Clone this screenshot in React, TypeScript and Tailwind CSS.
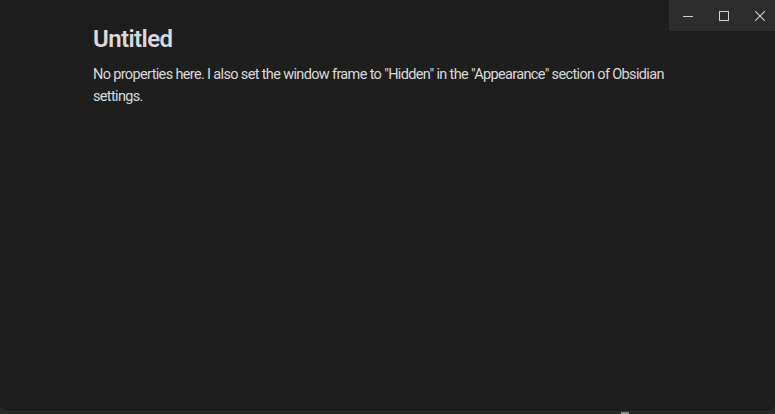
export default function App() {
  return (
    <div className="relative h-[414px] w-[775px] overflow-hidden bg-[#262626] font-['Roboto',sans-serif]">
      <div className="flex h-[412px] flex-col rounded-b-[7px] border-b border-[#2f2f2f] bg-[#1e1e1e] pl-[93px] pt-[24px]">
        <h1 className="text-[24px] font-semibold leading-[30px] tracking-[-0.6px] text-[#dadada]">Untitled</h1>
        <p className="mt-[10px] w-[590px] text-[14.5px] leading-[22px] tracking-[-0.65px] text-[#dadada]">
          No properties here. I also set the window frame to "Hidden" in the "Appearance" section of Obsidian settings.
        </p>
      </div>
      <div className="absolute bottom-0 left-[621px] h-[2px] w-[8px] bg-[#8a8a8a]" />

      {/* window controls */}
      <div className="absolute right-0 top-0 flex h-[31px] w-[106px] bg-[#2d2d2d] text-[#cfcfcf]">
        <button className="flex w-[37px] items-center justify-center">
          <svg width="10" height="10" viewBox="0 0 10 10"><path d="M0 5.5h10" stroke="currentColor" strokeWidth="1" /></svg>
        </button>
        <button className="flex w-[36px] items-center justify-center">
          <svg width="10" height="10" viewBox="0 0 10 10"><rect x="0.5" y="0.5" width="9" height="9" fill="none" stroke="currentColor" strokeWidth="1" /></svg>
        </button>
        <button className="flex w-[33px] items-center justify-center pl-[3px]">
          <svg width="10" height="10" viewBox="0 0 10 10"><path d="M0 0L10 10M10 0L0 10" stroke="currentColor" strokeWidth="1.1" /></svg>
        </button>
      </div>
    </div>
  );
}
